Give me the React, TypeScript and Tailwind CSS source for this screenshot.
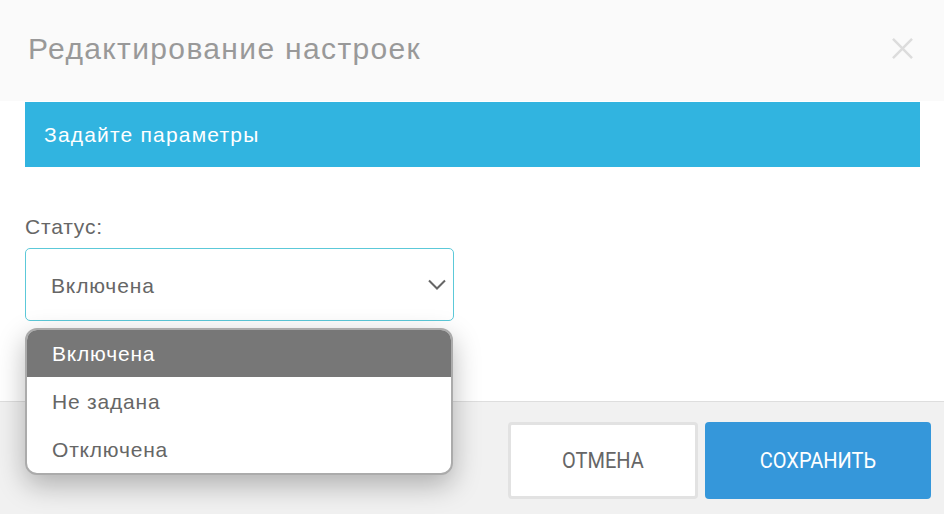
const OPTIONS = ['Включена', 'Не задана', 'Отключена']

export default function App() {
  const selected = 'Включена'

  return (
    <div className="w-[944px] h-[514px] bg-white flex flex-col overflow-hidden font-['Liberation_Sans',Arial,sans-serif]">
      {/* Header */}
      <div className="h-[101px] shrink-0 bg-[#fafafa] flex items-center justify-between pl-[28px] pr-[31px]">
        <h1 className="text-[30px] text-[#999] leading-none tracking-[1.35px] pb-[4px]">Редактирование настроек</h1>
        <button className="text-[#dcdcdc] pb-[5px]" title="Закрыть">
          <svg width="21" height="21" viewBox="0 0 22 22" fill="none" stroke="currentColor" strokeWidth="2.6">
            <path d="M1 1L21 21M21 1L1 21" />
          </svg>
        </button>
      </div>

      {/* Body */}
      <div className="flex-1 pl-[25px] pr-[24px] pt-[1px]">
        <div className="h-[65px] bg-[#31b4e0] flex items-center pl-[19px]">
          <span className="text-white text-[21px] leading-none tracking-[1.2px]">Задайте параметры</span>
        </div>

        <label className="block mt-[49px] text-[21px] text-[#666] leading-none tracking-[0.8px]">Статус:</label>

        <div className="relative w-[429px] mt-[11px]">
          <div className="h-[73px] border border-[#5cc9d9] rounded-[5px] flex items-center justify-between pl-[25px] pr-[7px] pt-[2px] bg-white">
            <span className="text-[21px] text-[#666] leading-none tracking-[0.85px]">{selected}</span>
            <svg width="18" height="11" viewBox="0 0 18 11" fill="none" stroke="#666" strokeWidth="2" className="mb-[2px]">
              <path d="M1 1.5L9 9.5L17 1.5" />
            </svg>
          </div>

          {/* Open list */}
          <div className="absolute z-10 left-0 top-[80px] w-[428px] bg-white border-2 border-[#ababab] rounded-[12px] overflow-hidden shadow-[0_10px_28px_rgba(0,0,0,0.28)]">
            {OPTIONS.map((o) => (
              <div
                key={o}
                className={`flex items-center pl-[25px] text-[21px] leading-none tracking-[0.8px] ${
                  o === selected ? 'h-[47px] bg-[#777] text-white' : 'h-[48px] text-[#666]'
                }`}
              >
                {o}
              </div>
            ))}
          </div>
        </div>
      </div>

      {/* Footer */}
      <div className="h-[113px] shrink-0 bg-[#f1f1f1] border-t border-[#dedede] flex items-start justify-end gap-[7px] pt-[20px] pr-[13px]">
        <button className="w-[190px] h-[77px] bg-white border-[3px] border-[#e2e2e2] rounded-[4px] text-[22px] text-[#666] font-['Roboto',sans-serif]">
          <span className="inline-block scale-x-[0.91]">ОТМЕНА</span>
        </button>
        <button className="w-[226px] h-[77px] bg-[#3597da] rounded-[4px] text-[22px] text-white font-['Roboto',sans-serif]">
          <span className="inline-block scale-x-[0.91]">СОХРАНИТЬ</span>
        </button>
      </div>
    </div>
  )
}
